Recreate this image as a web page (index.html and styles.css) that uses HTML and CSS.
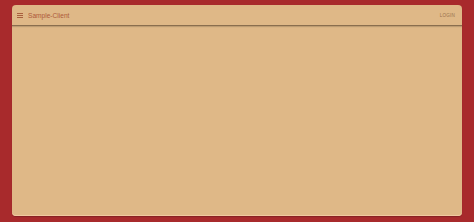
FILE: index.html
```html
<!DOCTYPE html>
<html lang="en">
<head>
    <meta charset="UTF-8">
    <title>Sample-Client</title>
    <link rel="stylesheet" href="styles.css">
</head>
<body>
    <div class="panel">
        <div class="toolbar">
            <span class="menu-icon">
                <svg width="6" height="5" viewBox="0 0 6 5"><path d="M0 0.5H6M0 2.5H6M0 4.5H6" stroke="#a8603e" stroke-width="1"/></svg>
            </span>
            <span class="title">Sample-Client</span>
            <span class="spacer"></span>
            <button class="login">Login</button>
        </div>
        <div class="content"></div>
    </div>
</body>
</html>
```

FILE: styles.css
```css
body {
    margin: 0;
    padding: 5px 12px 6px;
    background-color: #a82a2c;
    font-family: "Liberation Sans", Arial, sans-serif;
    height: 222px;
    box-sizing: border-box;
    display: flex;
}

.panel {
    flex: 1;
    display: flex;
    flex-direction: column;
    background-color: #dfb887;
    border-radius: 4px;
    box-shadow: inset 0 -1px 0 #f2c9a0, 0 1px 1px rgba(0,0,0,0.2);
    overflow: hidden;
}

.toolbar {
    height: 20px;
    display: flex;
    align-items: center;
    padding: 0 7px 0 5px;
    border-bottom: 1px solid #8a6e4e;
    box-shadow: 0 1px 1px rgba(0,0,0,0.15);
}

.menu-icon {
    display: flex;
    margin-right: 5px;
}

.title {
    font-size: 6.6px;
    color: #ae5a3a;
}

.spacer {
    flex: 1;
}

.login {
    background: none;
    border: none;
    padding: 0;
    font-family: inherit;
    font-size: 4.6px;
    text-transform: uppercase;
    color: #98704e;
    letter-spacing: 0.2px;
}

.content {
    flex: 1;
}
```
